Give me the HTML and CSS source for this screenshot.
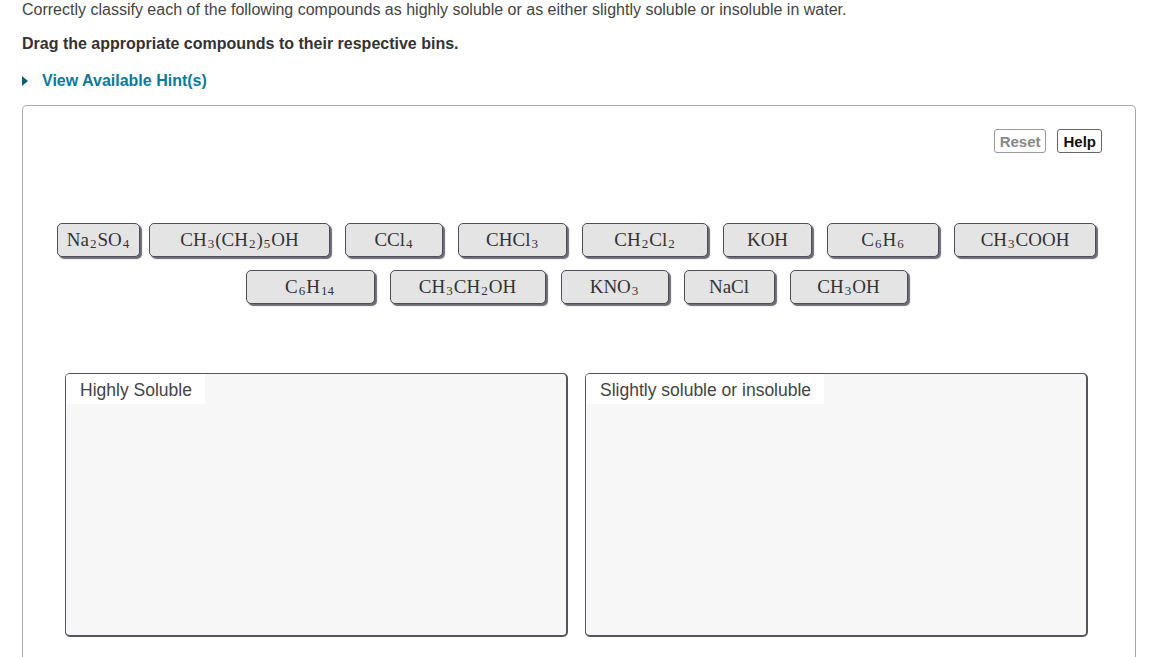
FILE: index.html
```html
<!DOCTYPE html>
<html lang="en">
<head>
<meta charset="UTF-8">
<title>Solubility Sorting</title>
<link rel="stylesheet" href="styles.css">
</head>
<body>
<p class="intro">Correctly classify each of the following compounds as highly soluble or as either slightly soluble or insoluble in water.</p>
<p class="task">Drag the appropriate compounds to their respective bins.</p>
<div class="hint"><span class="hint-arrow"></span><a href="#">View Available Hint(s)</a></div>

<div class="panel">
    <div class="tools">
        <button class="tool reset">Reset</button>
        <button class="tool help">Help</button>
    </div>

    <!-- Draggable compounds -->
    <div class="tiles">
        <div class="tile t-na2so4">Na<sub>2</sub>SO<sub>4</sub></div>
        <div class="tile t-hexanol">CH<sub>3</sub>(CH<sub>2</sub>)<sub>5</sub>OH</div>
        <div class="tile t-ccl4">CCl<sub>4</sub></div>
        <div class="tile t-chcl3">CHCl<sub>3</sub></div>
        <div class="tile t-ch2cl2">CH<sub>2</sub>Cl<sub>2</sub></div>
        <div class="tile t-koh">KOH</div>
        <div class="tile t-c6h6">C<sub>6</sub>H<sub>6</sub></div>
        <div class="tile t-acetic">CH<sub>3</sub>COOH</div>
    </div>
    <div class="tiles">
        <div class="tile t-c6h14">C<sub>6</sub>H<sub>14</sub></div>
        <div class="tile t-ethanol">CH<sub>3</sub>CH<sub>2</sub>OH</div>
        <div class="tile t-kno3">KNO<sub>3</sub></div>
        <div class="tile t-nacl">NaCl</div>
        <div class="tile t-methanol">CH<sub>3</sub>OH</div>
    </div>

    <!-- Bins -->
    <div class="bins">
        <div class="bin"><span class="bin-label">Highly Soluble</span></div>
        <div class="bin"><span class="bin-label">Slightly soluble or insoluble</span></div>
    </div>
</div>
</body>
</html>
```

FILE: styles.css
```css
body {
    margin: 0;
    padding: 0 30px 0 22px;
    font-family: 'Liberation Sans', Arial, sans-serif;
    color: #333;
    background: #fff;
}

.intro {
    margin: 1px 0 0 0;
    font-size: 16px;
    line-height: 18px;
    color: #444;
}

.task {
    margin: 16px 0 0 0;
    font-size: 16px;
    line-height: 18px;
    font-weight: bold;
    color: #333;
}

.hint {
    display: flex;
    align-items: center;
    margin-top: 19px;
    height: 18px;
}

.hint-arrow {
    width: 0;
    height: 0;
    border-top: 5px solid transparent;
    border-bottom: 5px solid transparent;
    border-left: 6px solid #0b5d80;
    margin-right: 14px;
}

.hint a {
    font-size: 16px;
    font-weight: bold;
    color: #0a7a9c;
    text-decoration: none;
}

.panel {
    margin-top: 15px;
    border: 1px solid #aaa;
    border-bottom: none;
    border-radius: 5px 5px 0 0;
    height: 560px;
    padding: 23px 33px 0 28px;
}

.tools {
    display: flex;
    justify-content: flex-end;
    gap: 11px;
}

.tool {
    height: 24px;
    padding: 0 5px;
    background: #fff;
    border: 1px solid #999;
    border-radius: 3px;
    font-family: 'Liberation Sans', Arial, sans-serif;
    font-size: 15px;
    font-weight: bold;
    cursor: pointer;
}

.reset {
    color: #888;
}

.help {
    color: #111;
    border-color: #666;
}

.tiles {
    display: flex;
    justify-content: center;
    gap: 15px;
    margin-top: 13px;
}

.tools + .tiles {
    margin-top: 70px;
}

.tile {
    box-sizing: border-box;
    height: 34px;
    display: flex;
    align-items: center;
    justify-content: center;
    background: #e4e4e4;
    border: 1px solid #4e4e58;
    border-radius: 5px;
    box-shadow: 2px 2px 1px #6b6b75;
    font-family: 'Liberation Serif', 'Times New Roman', serif;
    font-size: 19px;
    color: #333;
    cursor: move;
}

.tile sub {
    font-size: 13px;
    position: relative;
    top: 4px;
    vertical-align: baseline;
    line-height: 0;
    margin: 0 1px;
}

.t-na2so4 { width: 83px; margin-right: -6px; }
.t-hexanol { width: 181px; }
.t-ccl4 { width: 98px; }
.t-chcl3 { width: 109px; }
.t-ch2cl2 { width: 126px; }
.t-koh { width: 89px; }
.t-c6h6 { width: 112px; }
.t-acetic { width: 142px; }
.t-c6h14 { width: 129px; }
.t-ethanol { width: 156px; }
.t-kno3 { width: 108px; }
.t-nacl { width: 91px; }
.t-methanol { width: 118px; }

.bins {
    display: flex;
    justify-content: center;
    gap: 17px;
    margin-top: 69px;
}

.bin {
    box-sizing: border-box;
    width: 503px;
    height: 264px;
    background: #f7f7f7;
    border: 1px solid #55555f;
    border-right-width: 2px;
    border-bottom-width: 2px;
    border-radius: 5px;
}

.bin-label {
    display: inline-block;
    background: #fff;
    padding: 7px 13px 5px 14px;
    font-size: 17.5px;
    line-height: 18px;
    color: #444;
    border-top-left-radius: 4px;
}
```
